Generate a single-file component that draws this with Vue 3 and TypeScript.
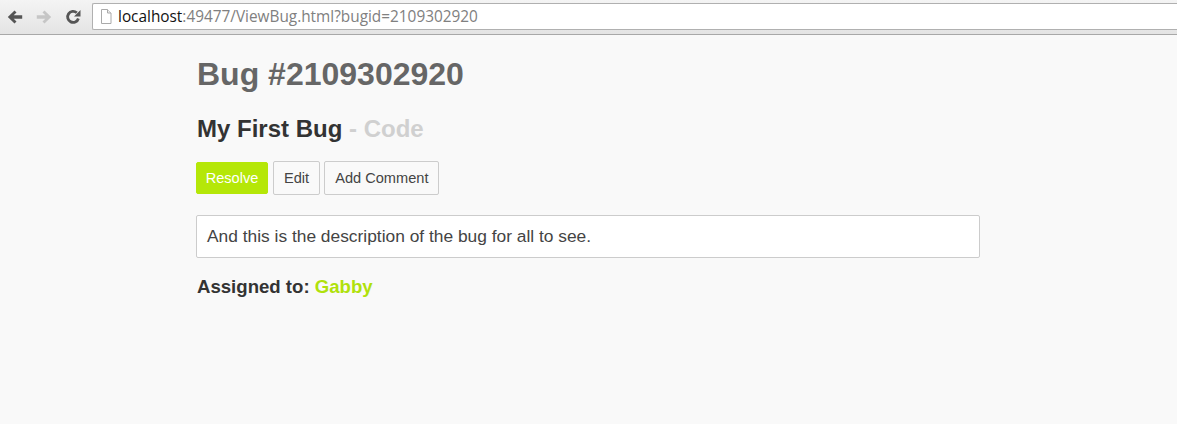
<script setup lang="ts">
const url = { host: 'localhost', rest: ':49477/ViewBug.html?bugid=2109302920' }
</script>

<template>
  <div class="page">
    <header class="toolbar">
      <div class="navs">
        <svg class="nav" viewBox="0 0 16 16" width="16" height="16"><path d="M7.500 1.500.8 8l6.700 6.500 2-2-2.800-2.700h8.500V6.200H6.700l2.800-2.700z" fill="#555" /></svg>
        <svg class="nav" viewBox="0 0 16 16" width="16" height="16"><path d="M8.500 1.500 15.200 8l-6.700 6.500-2-2 2.800-2.700H.8V6.200h8.500L6.500 3.500z" fill="#c6c6c6" /></svg>
        <svg class="nav" viewBox="0 0 16 16" width="16" height="16"><path d="M13.400 9.500A5.500 5.500 0 1 1 11.800 3.800" fill="none" stroke="#555" stroke-width="2.800" /><path d="M9 7.500h6.500V1z" fill="#555" /></svg>
      </div>
      <div class="omnibox">
        <svg viewBox="0 0 12 15" width="12" height="15"><path d="M1.500.5h6l3.500 3.500v10.500h-9.500z" fill="#fff" stroke="#aaa" /><path d="M7.500.5v3.500H11" fill="#eee" stroke="#aaa" /></svg>
        <span class="url"><span class="host">{{ url.host }}</span>{{ url.rest }}</span>
      </div>
    </header>

    <main class="content">
      <h1>Bug #2109302920</h1>
      <h2>My First Bug <span class="muted">- Code</span></h2>
      <div class="actions">
        <button class="btn primary">Resolve</button>
        <button class="btn">Edit</button>
        <button class="btn">Add Comment</button>
      </div>
      <div class="description">And this is the description of the bug for all to see.</div>
      <p class="assigned">Assigned to: <span class="assignee">Gabby</span></p>
    </main>
  </div>
</template>

<style>
html, body { margin: 0; background: #f9f9f9; }
</style>

<style scoped>
.page {
  height: 424px;
  background: #f9f9f9;
  font-family: "Liberation Sans", Arial, sans-serif;
  color: #333;
  overflow: hidden;
}
.toolbar {
  box-sizing: border-box;
  height: 35px;
  padding: 3px 0 3px 7px;
  display: flex;
  align-items: flex-start;
  background: linear-gradient(#f4f4f4, #e4e4e4);
  border-bottom: 1px solid #a8a8a8;
}
.navs { display: flex; gap: 13px; padding-top: 6px; width: 85px; flex: none; }
.nav { flex: none; }
.omnibox {
  box-sizing: border-box;
  flex: 1;
  height: 27px;
  display: flex;
  align-items: center;
  gap: 6px;
  padding-left: 7px;
  background: #fff;
  border: 1px solid #b0b0b0;
  border-right: 0;
  border-radius: 2px 0 0 2px;
}
.url { font: 15.370px "Open Sans", "Liberation Sans", sans-serif; color: #808080; white-space: nowrap; }
.host { color: #111; }
.content { margin-left: 196px; width: 784px; }
h1 { margin: 20px 0 0; padding-left: 1px; font-size: 32px; line-height: 38px; font-weight: 700; color: #666; }
h2 { margin: 22px 0 0; padding-left: 1px; font-size: 24px; line-height: 28px; font-weight: 700; color: #333; }
.muted { color: #d0d0d0; }
.actions { display: flex; align-items: center; gap: 4px; margin-top: 18px; }
.btn {
  box-sizing: border-box;
  height: 34px;
  padding: 0 10px;
  background: #f9f9f9;
  border: 1px solid #ccc;
  border-radius: 2px;
  color: #444;
  font: 14.600px "Liberation Sans", Arial, sans-serif;
}
.primary { width: 72px; height: 32px; padding: 0; margin-right: 1px; background: #b5e708; border-color: #b5e708; color: #fff; }
.description {
  box-sizing: border-box;
  height: 43px;
  margin-top: 20px;
  padding: 0 10px;
  display: flex;
  align-items: center;
  background: #fff;
  border: 1px solid #ccc;
  border-radius: 2px;
  font-size: 17.360px;
  color: #444;
}
.assigned { margin: 19px 0 0; padding-left: 1px; font-size: 18.600px; line-height: 20px; font-weight: 700; }
.assignee { color: #b0e10c; }
</style>
